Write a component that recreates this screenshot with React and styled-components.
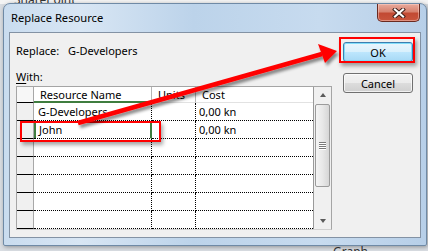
import React from 'react';
import styled, { createGlobalStyle } from 'styled-components';

const GlobalStyle = createGlobalStyle`
  html, body {
    margin: 0;
    padding: 0;
    background: #e6e6e6;
  }
  * {
    box-sizing: border-box;
  }
`;

const rows = [
  { name: 'G-Developers', units: '', cost: '0,00 kn' },
  { name: 'John', units: '', cost: '0,00 kn', selected: true },
  { name: '', units: '', cost: '' },
  { name: '', units: '', cost: '' },
  { name: '', units: '', cost: '' },
  { name: '', units: '', cost: '' },
  { name: '', units: '', cost: '' },
];

const App = () => {
  return (
    <>
      <GlobalStyle />
      <Screen>
        <BackdropText $left={14} $top={-9}>SharePoint</BackdropText>
        <BackdropText $left={333} $top={243}>Graph</BackdropText>

        <Window>
          <TitleBar>
            <Title>Replace Resource</Title>
            <CloseButton>
              <svg width="14" height="10" viewBox="0 0 14 10">
                <path d="M3 1.5 L11 8.5 M11 1.5 L3 8.5" stroke="#3a1a14" strokeWidth="4" strokeLinecap="square" />
                <path d="M3 1.5 L11 8.5 M11 1.5 L3 8.5" stroke="#ffffff" strokeWidth="2.2" strokeLinecap="square" />
              </svg>
            </CloseButton>
          </TitleBar>

          <Client>
            <LeftPane>
              <InfoLine>
                <InfoLabel>Replace:</InfoLabel>
                G-Developers
              </InfoLine>
              <WithLabel>
                <u>W</u>ith:
              </WithLabel>

              <Grid>
                <CornerCell />
                <HeaderCell $active>Resource Name</HeaderCell>
                <HeaderCell>Units</HeaderCell>
                <HeaderCell $last>Cost</HeaderCell>
                <ScrollBar>
                  <ScrollArrowBox>
                    <ArrowUp />
                  </ScrollArrowBox>
                  <Thumb>
                    <Grip />
                    <Grip />
                    <Grip />
                    <Grip />
                  </Thumb>
                  <ScrollTrack />
                  <ScrollArrowBox>
                    <ArrowDown />
                  </ScrollArrowBox>
                </ScrollBar>

                {rows.map((row, i) => (
                  <React.Fragment key={i}>
                    <RowHeader />
                    <Cell $selected={row.selected} $pad={row.selected ? 3 : 4}>
                      {row.name}
                    </Cell>
                    <Cell>{row.units}</Cell>
                    <Cell $last $pad={3}>
                      {row.cost}
                    </Cell>
                  </React.Fragment>
                ))}
              </Grid>
            </LeftPane>

            <ButtonColumn>
              <Button $default>OK</Button>
              <Button>Cancel</Button>
            </ButtonColumn>
          </Client>
        </Window>

        <RedBox $x={20} $y={121} $w={141} $h={21} />
        <RedBox $x={339} $y={37} $w={76} $h={26} />

        <ArrowLayer width="428" height="251" viewBox="0 0 428 251">
          <defs>
            <filter id="shadow" x="-10%" y="-30%" width="130%" height="180%">
              <feDropShadow dx="2" dy="3" stdDeviation="1.6" floodColor="#000" floodOpacity="0.45" />
            </filter>
          </defs>
          <g filter="url(#shadow)">
            <line x1="78" y1="123" x2="322" y2="54" stroke="#ff0000" strokeWidth="4.5" />
            <polygon points="337,51 318,44 325,63" fill="#ff0000" />
          </g>
        </ArrowLayer>
      </Screen>
    </>
  );
};

// Styled Components
const Screen = styled.div`
  position: relative;
  width: 428px;
  height: 251px;
  overflow: hidden;
  padding: 3px 1px 0 3px;
  background: linear-gradient(to bottom, #f4f4f4 0, #f4f4f4 4px, #d9dde2 4px);
  font-family: "Noto Sans", "Open Sans", sans-serif;
`;

const BackdropText = styled.div`
  position: absolute;
  left: ${(p) => p.$left}px;
  top: ${(p) => p.$top}px;
  font-size: 12px;
  color: #333;
`;

const Window = styled.div`
  position: relative;
  display: flex;
  flex-direction: column;
  width: 424px;
  height: 243px;
  border: 1px solid #6f8aa6;
  border-radius: 7px 7px 2px 2px;
  background: linear-gradient(
    to right,
    #c9dcef 0%,
    #d8e6f4 18%,
    #bcd3ea 45%,
    #c7dbef 75%,
    #b7cfe8 100%
  );
  box-shadow: 1px 1px 4px rgba(0, 0, 0, 0.35);
`;

const TitleBar = styled.div`
  display: flex;
  align-items: flex-start;
  height: 28px;
  padding-left: 7px;
`;

const Title = styled.div`
  margin-top: 6px;
  font-size: 11.2px;
  line-height: 15px;
  color: #000;
`;

const CloseButton = styled.div`
  display: flex;
  align-items: center;
  justify-content: center;
  margin-left: auto;
  margin-right: 6px;
  width: 43px;
  height: 18px;
  border: 1px solid #6a2a20;
  border-top: none;
  border-radius: 0 0 5px 5px;
  background: linear-gradient(to bottom, #e9aa9c 0%, #d7826f 45%, #c24a33 55%, #c8553d 100%);
  box-shadow: inset 0 0 0 1px rgba(255, 220, 210, 0.45);
`;

const Client = styled.div`
  display: flex;
  margin: 0 5px;
  height: 206px;
  border: 1px solid #8392a4;
  background: #f0f0f0;
`;

const LeftPane = styled.div`
  display: flex;
  flex-direction: column;
  padding: 10px 0 0 6px;
  font-size: 11px;
  color: #000;
`;

const InfoLine = styled.div`
  line-height: 15px;
`;

const InfoLabel = styled.span`
  display: inline-block;
  width: 52px;
`;

const WithLabel = styled.div`
  margin-top: 11px;
  line-height: 15px;

  u {
    text-decoration-thickness: 1px;
    text-underline-offset: 2px;
  }
`;

const Grid = styled.div`
  display: grid;
  grid-template-columns: 17px 118px 44px 117px 18px;
  grid-template-rows: 16px repeat(7, 18px);
  width: 316px;
  height: 144px;
  margin-top: 2px;
  border: 1px solid #a5a5a5;
  border-bottom-color: #d0d0d0;
  background: #fff;
`;

const CornerCell = styled.div`
  background: #f7f7f7;
  border-right: 1px solid #a8a8a8;
  border-bottom: 1px solid #000;
`;

const HeaderCell = styled.div`
  display: flex;
  align-items: center;
  padding-left: 6px;
  font-size: 11px;
  background: #fff;
  border-right: ${(p) => (p.$last ? 'none' : '1px solid #b5b5b5')};
  border-bottom: ${(p) => (p.$active ? '2px solid #3f7d3f' : '1px solid #e2e2e2')};
  white-space: nowrap;
  overflow: hidden;
`;

const RowHeader = styled.div`
  background: #f0f0f0;
  border-right: 1px solid #a8a8a8;
  border-bottom: 1px solid #000;
`;

const Cell = styled.div`
  display: flex;
  align-items: center;
  padding-left: ${(p) => p.$pad || 4}px;
  font-size: 11px;
  white-space: nowrap;
  overflow: hidden;
  border-bottom: 1px dotted #000;
  border-right: ${(p) => (p.$last ? 'none' : '1px dotted #000')};
  ${(p) =>
    p.$selected &&
    `
    border-right: 2px solid #3f7d3f;
    box-shadow: inset 2px 0 0 #3f7d3f;
    padding-left: 5px;
  `}
`;

const ScrollBar = styled.div`
  grid-column: 5;
  grid-row: 1 / -1;
  display: flex;
  flex-direction: column;
  border-left: 1px solid #9a9a9a;
  background: #f0f0f0;
`;

const ScrollArrowBox = styled.div`
  display: flex;
  align-items: center;
  justify-content: center;
  height: 16px;
  flex-shrink: 0;
`;

const ArrowUp = styled.div`
  width: 0;
  height: 0;
  border-left: 3.5px solid transparent;
  border-right: 3.5px solid transparent;
  border-bottom: 4px solid #5a5a5a;
`;

const ArrowDown = styled.div`
  width: 0;
  height: 0;
  border-left: 3.5px solid transparent;
  border-right: 3.5px solid transparent;
  border-top: 4px solid #5a5a5a;
`;

const Thumb = styled.div`
  display: flex;
  flex-direction: column;
  align-items: center;
  justify-content: center;
  gap: 1px;
  height: 83px;
  margin: 1px 1px 0 1px;
  border: 1px solid #9b9b9b;
  border-radius: 2px;
  background: linear-gradient(to right, #f4f4f4 0%, #e8e8e8 50%, #d6d6d6 100%);
`;

const Grip = styled.div`
  width: 7px;
  height: 1px;
  background: #7a7a7a;
  box-shadow: 0 1px 0 #fff;
`;

const ScrollTrack = styled.div`
  flex: 1;
`;

const ButtonColumn = styled.div`
  display: flex;
  flex-direction: column;
  gap: 11px;
  padding-top: 9px;
  margin-left: 11px;
`;

const Button = styled.div`
  display: flex;
  align-items: center;
  justify-content: center;
  width: 70px;
  height: 20px;
  font-size: 11px;
  color: #000;
  border-radius: 3px;
  border: 1px solid ${(p) => (p.$default ? '#3c7fb1' : '#707070')};
  background: ${(p) =>
    p.$default
      ? 'linear-gradient(to bottom, #eaf6fd 0%, #d9f0fc 50%, #bee6fd 50%, #a7d9f5 100%)'
      : 'linear-gradient(to bottom, #f2f2f2 0%, #ebebeb 50%, #dddddd 50%, #cfcfcf 100%)'};
  box-shadow: inset 0 0 0 1px
    ${(p) => (p.$default ? 'rgba(120, 220, 250, 0.9)' : 'rgba(255, 255, 255, 0.7)')};
`;

const RedBox = styled.div`
  position: absolute;
  left: ${(p) => p.$x}px;
  top: ${(p) => p.$y}px;
  width: ${(p) => p.$w}px;
  height: ${(p) => p.$h}px;
  border: 2px solid #ff0000;
  box-shadow: 2px 3px 4px rgba(0, 0, 0, 0.35);
  pointer-events: none;
`;

const ArrowLayer = styled.svg`
  position: absolute;
  left: 0;
  top: 0;
  pointer-events: none;
`;

export default App;
